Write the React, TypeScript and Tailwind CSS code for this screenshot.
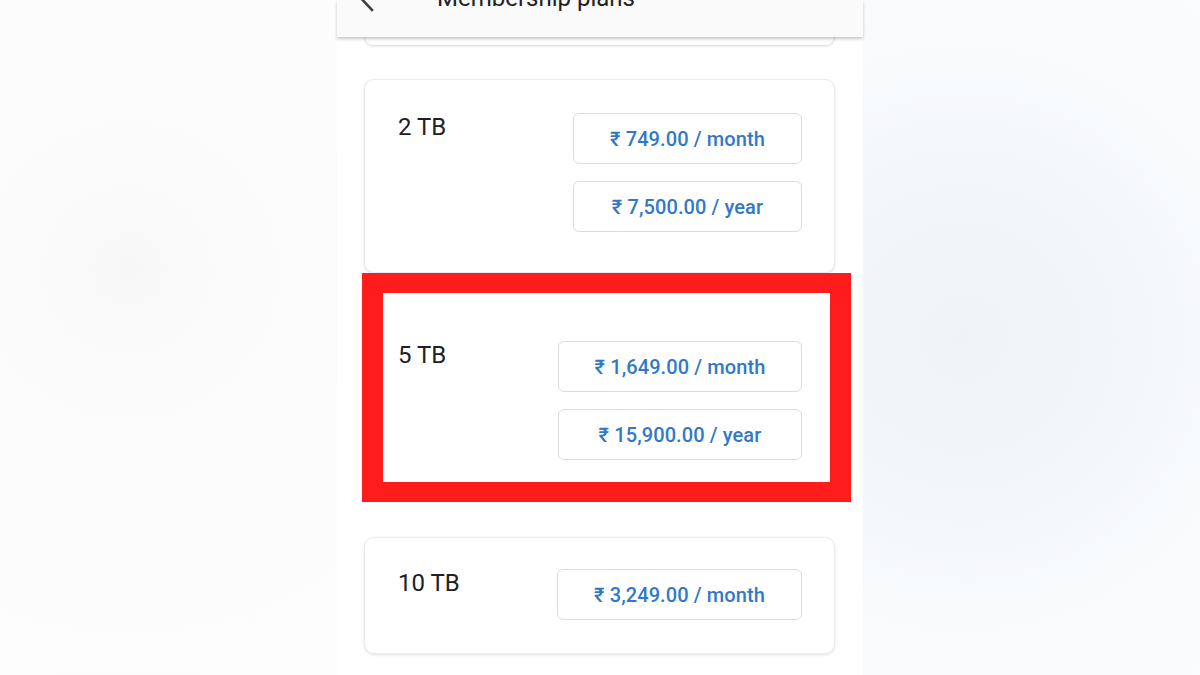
import React from "react";

type Plan = { size: string; prices: string[]; btnW: string; pt: string; pb: string };

function PriceButton({ label, w }: { label: string; w: string }) {
  return (
    <div
      className={`${w} h-[51px] flex items-center justify-center rounded-[6px] border border-[#dadce0] bg-white text-[20px] font-medium text-[#3179c8] tracking-[0.1px]`}
      style={{ fontFamily: "Roboto, 'Noto Sans', sans-serif" }}
    >
      {label}
    </div>
  );
}

function PlanCard({ plan, plain }: { plan: Plan; plain?: boolean }) {
  return (
    <div
      className={`flex justify-between rounded-[10px] bg-white border pl-[33px] pr-[32px] ${plan.pt} ${plan.pb} ${
        plain ? "border-transparent" : "border-[#ececec] shadow-[0_1px_3px_rgba(0,0,0,0.12)]"
      }`}
    >
      <div
        className="text-[24px] leading-[28px] text-[#202124]"
        style={{ fontFamily: "Roboto, 'Noto Sans', sans-serif" }}
      >
        {plan.size}
      </div>
      <div className="flex flex-col gap-[17px]">
        {plan.prices.map((p) => (
          <PriceButton key={p} label={p} w={plan.btnW} />
        ))}
      </div>
    </div>
  );
}

export default function App() {
  const plan2: Plan = {
    size: "2 TB",
    prices: ["₹ 749.00 / month", "₹ 7,500.00 / year"],
    btnW: "w-[229px]",
    pt: "pt-[33px]",
    pb: "pb-[40px]",
  };
  const plan5: Plan = {
    size: "5 TB",
    prices: ["₹ 1,649.00 / month", "₹ 15,900.00 / year"],
    btnW: "w-[244px]",
    pt: "pt-[34px]",
    pb: "pb-[40px]",
  };
  const plan10: Plan = {
    size: "10 TB",
    prices: ["₹ 3,249.00 / month"],
    btnW: "w-[245px]",
    pt: "pt-[31px]",
    pb: "pb-[33px]",
  };

  return (
    <div className="flex w-[1200px] h-[675px] overflow-hidden bg-white">
      {/* left blurred background */}
      <div className="w-[337px] h-full bg-[#fcfcfc] bg-[radial-gradient(circle_at_38%_40%,#f7f7f7_0%,#fafafa_18%,#fcfcfc_34%,#fdfdfd_100%)]" />

      {/* phone screen */}
      <div className="w-[526px] h-full bg-white flex flex-col">
        <div className="relative z-10 h-[37px] shrink-0 bg-[#fafafa] shadow-[0_2px_3px_rgba(0,0,0,0.22)] overflow-hidden">
          <div className="flex items-start -mt-[20px]">
            <svg
              className="ml-[14px] shrink-0"
              width="40"
              height="40"
              viewBox="0 0 40 40"
              fill="none"
              stroke="#3c4043"
              strokeWidth="2.6"
              strokeLinecap="square"
            >
              <path d="M34 14H6M6 14L20 2M6 14L21 30" />
            </svg>
            <div
              className="ml-[46px] mt-[4px] text-[24px] leading-[28px] text-[#202124]"
              style={{ fontFamily: "Roboto, 'Noto Sans', sans-serif" }}
            >
              Membership plans
            </div>
          </div>
        </div>

        <div className="flex flex-col px-[27px] pr-[28px]">
          {/* bottom of the previous card */}
          <div className="h-[9px] rounded-b-[10px] border-x border-b border-[#e2e2e2] shadow-[0_1px_2px_rgba(0,0,0,0.08)]" />

          <div className="mt-[33px]">
            <PlanCard plan={plan2} />
          </div>

          <div className="relative mt-[33px]">
            <PlanCard plan={plan5} plain />
            <div className="absolute -left-[2px] -right-[16px] -top-[33px] -bottom-[1px] border-[20px] border-l-[21px] border-r-[21px] border-[#ff1c1c]" />
          </div>

          <div className="mt-[36px]">
            <PlanCard plan={plan10} />
          </div>
        </div>
      </div>

      {/* right blurred background */}
      <div className="flex-1 h-full bg-[#f3f6f9] bg-[radial-gradient(circle_at_30%_50%,#eef3f7_0%,#f2f6f9_30%,#f8fafc_70%,#fbfcfd_100%)]" />
    </div>
  );
}
